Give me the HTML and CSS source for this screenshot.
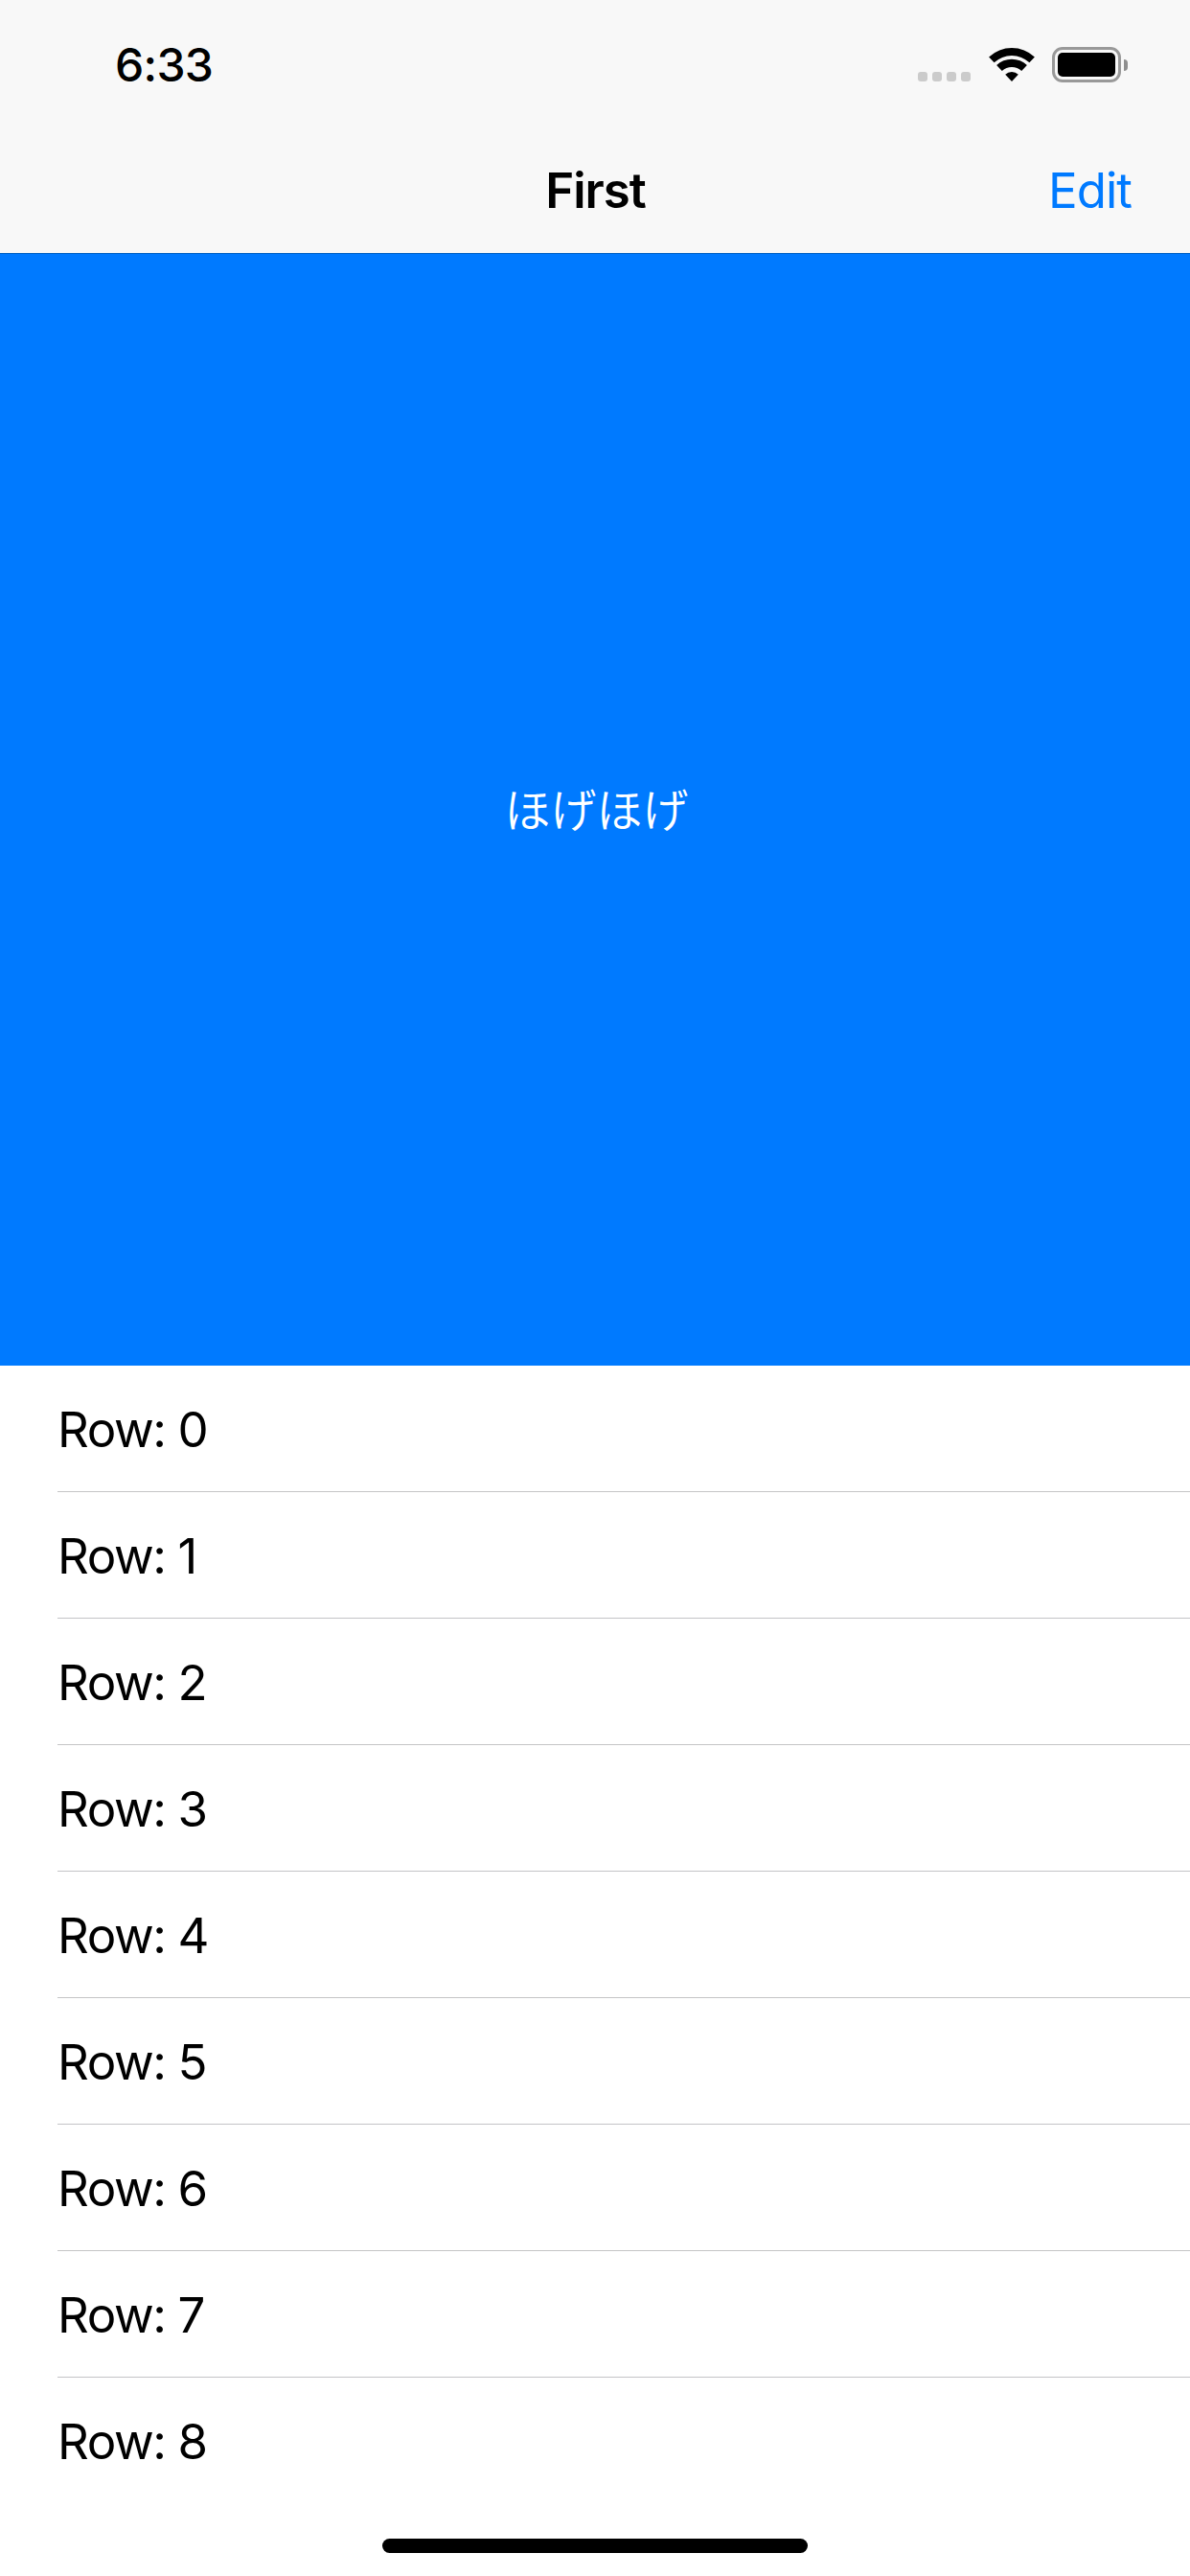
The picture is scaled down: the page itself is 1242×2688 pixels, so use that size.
FILE: index.html
```html
<!DOCTYPE html>
<html lang="ja">
<head>
<meta charset="utf-8">
<title>First</title>
<link rel="stylesheet" href="styles.css">
</head>
<body>
<div class="screen">
  <header class="chrome">
    <div class="status">
      <span class="time">6:33</span>
      <div class="indicators">
        <div class="signal"><i></i><i></i><i></i><i></i></div>
        <svg class="wifi" viewBox="0 0 48 36" aria-hidden="true"><path d="M0.1 10.4A35 35 0 0 1 47.9 10.4L42.4 16.3A27 27 0 0 0 5.6 16.3Z"/><path d="M8.1 19A23.3 23.3 0 0 1 39.9 19L34.2 25A15 15 0 0 0 13.8 25Z"/><path d="M17.2 28.7A10 10 0 0 1 30.8 28.7L24 36Z"/></svg>
        <div class="battery"><div class="cell"><div class="charge"></div></div><div class="nub"></div></div>
      </div>
    </div>
    <nav class="navbar">
      <span class="nav-side"></span>
      <h1 class="nav-title">First</h1>
      <span class="nav-side nav-edit">Edit</span>
    </nav>
  </header>
  <section class="hero">ほげほげ</section>
  <ul class="list">
    <li class="row"><span class="row-text">Row: 0</span></li>
    <li class="row"><span class="row-text">Row: 1</span></li>
    <li class="row"><span class="row-text">Row: 2</span></li>
    <li class="row"><span class="row-text">Row: 3</span></li>
    <li class="row"><span class="row-text">Row: 4</span></li>
    <li class="row"><span class="row-text">Row: 5</span></li>
    <li class="row"><span class="row-text">Row: 6</span></li>
    <li class="row"><span class="row-text">Row: 7</span></li>
    <li class="row"><span class="row-text">Row: 8</span></li>
  </ul>
  <div class="home-bar"></div>
</div>
</body>
</html>
```
FILE: styles.css
```css
* { box-sizing: border-box; }
html, body { margin: 0; padding: 0; overflow: hidden; background: #fff; }
.screen {
  position: relative;
  width: 1242px;
  height: 2688px;
  overflow: hidden;
  font-family: Inter, "Noto Sans CJK JP", sans-serif;
  color: #000;
}
.chrome {
  height: 265px;
  background: #f8f8f8;
  border-bottom: 1px solid #0060c4;
  display: flex;
  flex-direction: column;
}
.status {
  height: 132px;
  display: flex;
  align-items: flex-start;
  justify-content: space-between;
  padding: 41px 65px 0 120px;
}
.time {
  font-size: 48px;
  font-weight: 550;
  line-height: 54px;
  letter-spacing: -0.7px;
}
.indicators {
  display: flex;
  align-items: flex-start;
  padding-top: 8px;
}
.signal {
  display: flex;
  gap: 5px;
  margin-top: 26px;
  margin-right: 19px;
}
.signal i {
  display: block;
  width: 10px;
  height: 10px;
  border-radius: 3px;
  background: #cbcbcb;
}
.wifi {
  display: block;
  width: 48px;
  height: 36px;
  margin-right: 18px;
  fill: #000;
}
.battery {
  display: flex;
  align-items: center;
}
.cell {
  width: 72px;
  height: 37px;
  padding: 3px;
  border: 3px solid #999;
  border-radius: 11px;
}
.charge {
  height: 100%;
  border-radius: 5px;
  background: #000;
}
.nub {
  width: 4px;
  height: 12px;
  margin-left: 3px;
  border-radius: 0 6px 6px 0;
  background: #8e8e8e;
}
.navbar {
  height: 132px;
  display: flex;
  align-items: center;
  justify-content: space-between;
  padding: 2px 61px 0 62px;
}
.nav-side { width: 120px; }
.nav-title {
  margin: 0;
  font-size: 51px;
  font-weight: 600;
  line-height: 66px;
  letter-spacing: -1px;
}
.nav-edit {
  color: #007aff;
  font-size: 51px;
  line-height: 66px;
  letter-spacing: -1px;
  text-align: right;
}
.hero {
  height: 1160px;
  padding: 0 0 6px 3px;
  background: #007aff;
  color: #fff;
  font-size: 48px;
  font-weight: 350;
  display: flex;
  align-items: center;
  justify-content: center;
}
.list {
  list-style: none;
  margin: 0;
  padding: 0;
}
.row {
  height: 132px;
  padding-left: 60px;
}
.row-text {
  display: flex;
  align-items: center;
  height: 100%;
  padding-top: 1px;
  font-size: 51px;
  letter-spacing: -1.4px;
  border-bottom: 1px solid #c4c4c6;
}
.row:last-child .row-text { border-bottom: 0; }
.home-bar {
  position: absolute;
  left: 399px;
  top: 2649px;
  width: 444px;
  height: 15px;
  border-radius: 8px;
  background: #000;
}
```
